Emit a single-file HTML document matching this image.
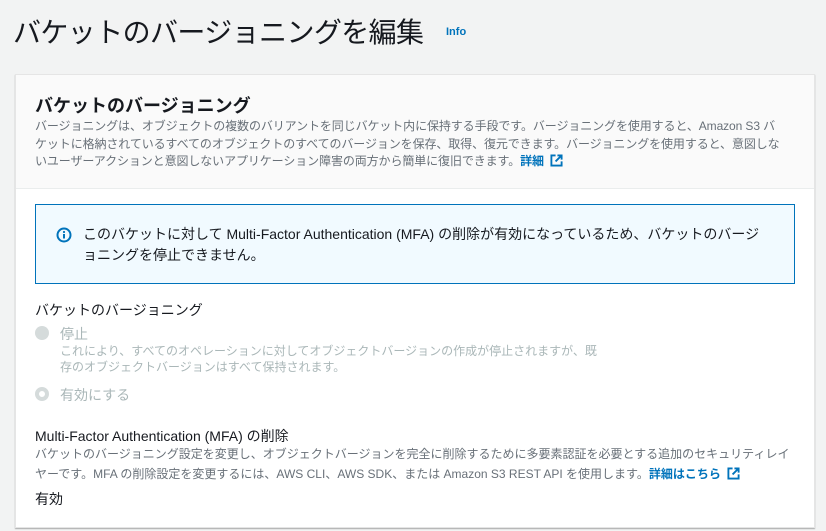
<!DOCTYPE html>
<html><head><meta charset="utf-8"><style>
*{margin:0;padding:0;box-sizing:border-box}
body{width:826px;height:531px;overflow:hidden;background:#f2f3f3;font-family:"Liberation Sans","Noto Sans CJK JP",sans-serif;color:#16191f;position:relative}
.a{position:absolute;white-space:nowrap}
h1{position:absolute;left:13px;top:11px;font-size:28px;font-weight:400;letter-spacing:-0.6px;white-space:nowrap}
.info{position:absolute;left:446px;top:26px;font-size:11px;font-weight:700;color:#0073bb}
.card{position:absolute;left:15px;top:74px;width:800px;height:454px;background:#fff;border:1px solid #e5e5e5;box-shadow:0 1px 1px rgba(0,0,0,.3)}
.hdr{position:absolute;left:0;top:0;width:798px;height:114px;background:#fafafa;border-bottom:1px solid #eaeded}
.desc{font-size:12px;color:#687078;line-height:17.5px}
.blue{color:#0073bb;font-weight:700}
.alert{position:absolute;left:35px;top:204px;width:760px;height:80px;background:#f1faff;border:1px solid #0073bb}
.ext{display:inline-block;width:13px;height:13px;vertical-align:-2px;margin-left:6px}
</style></head><body>
<h1>バケットのバージョニングを編集</h1>
<div class="info">Info</div>
<div class="card"><div class="hdr"></div></div>
<div class="a" style="left:35px;top:92px;font-size:18px;font-weight:700">バケットのバージョニング</div>
<div class="a desc" style="left:35px;top:118px;white-space:normal;width:750px;letter-spacing:-0.1px">バージョニングは、オブジェクトの複数のバリアントを同じバケット内に保持する手段です。バージョニングを使用すると、Amazon S3 バケットに格納されているすべてのオブジェクトのすべてのバージョンを保存、取得、復元できます。バージョニングを使用すると、意図しないユーザーアクションと意図しないアプリケーション障害の両方から簡単に復旧できます。<span class="blue">詳細</span><svg class="ext" viewBox="0 0 14 14"><path d="M6 1.5H1.5v11h11V8M8 1.5h4.5V6M12.5 1.5L6 8" fill="none" stroke="#0073bb" stroke-width="2"/></svg></div>
<div class="alert"></div>
<svg class="a" style="left:56px;top:227px" width="16" height="16" viewBox="0 0 16 16"><circle cx="8" cy="8" r="6.5" fill="none" stroke="#0073bb" stroke-width="2"/><circle cx="8" cy="5" r="1.1" fill="#0073bb"/><path d="M8 7v4.5" stroke="#0073bb" stroke-width="2"/></svg>
<div class="a" style="left:83px;top:224px;font-size:14px;line-height:21px;width:690px;white-space:normal">このバケットに対して Multi-Factor Authentication (MFA) の削除が有効になっているため、バケットのバージョニングを停止できません。</div>
<div class="a" style="left:35px;top:300px;font-size:14px">バケットのバージョニング</div>
<div class="a" style="left:35px;top:326px;width:14px;height:14px;border-radius:50%;background:#d5dbdb"></div>
<div class="a" style="left:60px;top:324px;font-size:14px;color:#aab7b8">停止</div>
<div class="a" style="left:60px;top:344px;font-size:12px;color:#aab7b8;line-height:15.5px">これにより、すべてのオペレーションに対してオブジェクトバージョンの作成が停止されますが、既<br>存のオブジェクトバージョンはすべて保持されます。</div>
<div class="a" style="left:35px;top:387px;width:14px;height:14px;border-radius:50%;border:4px solid #d5dbdb;background:#fff"></div>
<div class="a" style="left:60px;top:385px;font-size:14px;color:#aab7b8">有効にする</div>
<div class="a" style="left:35px;top:426px;font-size:14px">Multi-Factor Authentication (MFA) の削除</div>
<div class="a desc" style="left:35px;top:444px;line-height:20px">バケットのバージョニング設定を変更し、オブジェクトバージョンを完全に削除するために多要素認証を必要とする追加のセキュリティレイ<br>ヤーです。MFA の削除設定を変更するには、AWS CLI、AWS SDK、または Amazon S3 REST API を使用します。<span class="blue">詳細はこちら</span><svg class="ext" viewBox="0 0 14 14"><path d="M6 1.5H1.5v11h11V8M8 1.5h4.5V6M12.5 1.5L6 8" fill="none" stroke="#0073bb" stroke-width="2"/></svg></div>
<div class="a" style="left:35px;top:489px;font-size:14px">有効</div>
</body></html>
